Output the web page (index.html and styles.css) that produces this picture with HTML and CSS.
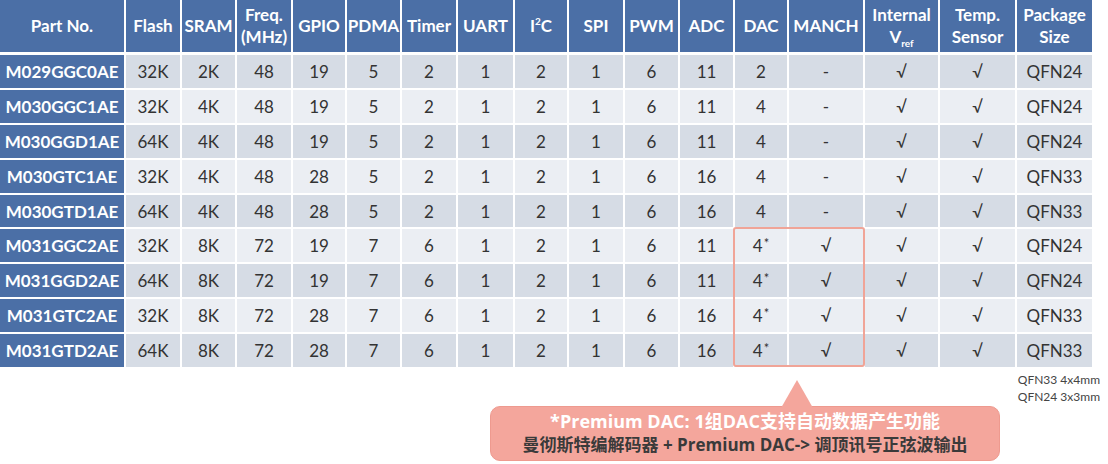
FILE: index.html
```html
<!DOCTYPE html>
<html lang="zh">
<head>
<meta charset="utf-8">
<title>M031 Series</title>
<link rel="stylesheet" href="styles.css">
</head>
<body>
<div class="page">
  <div class="table-wrap">
    <div class="grid">
      <div class="h"><span>Part No.</span></div>
      <div class="h"><span>Flash</span></div>
      <div class="h"><span>SRAM</span></div>
      <div class="h"><span>Freq.<br>(MHz)</span></div>
      <div class="h"><span>GPIO</span></div>
      <div class="h"><span>PDMA</span></div>
      <div class="h"><span>Timer</span></div>
      <div class="h"><span>UART</span></div>
      <div class="h"><span>I<sup>2</sup>C</span></div>
      <div class="h"><span>SPI</span></div>
      <div class="h"><span>PWM</span></div>
      <div class="h"><span>ADC</span></div>
      <div class="h"><span>DAC</span></div>
      <div class="h"><span>MANCH</span></div>
      <div class="h"><span>Internal<br>V<sub>ref</sub></span></div>
      <div class="h"><span>Temp.<br>Sensor</span></div>
      <div class="h"><span>Package<br>Size</span></div>

      <div class="p">M029GGC0AE</div><div class="c d">32K</div><div class="c d">2K</div><div class="c d">48</div><div class="c d">19</div><div class="c d">5</div><div class="c d">2</div><div class="c d">1</div><div class="c d">2</div><div class="c d">1</div><div class="c d">6</div><div class="c d">11</div><div class="c d">2</div><div class="c d">-</div><div class="c d">√</div><div class="c d">√</div><div class="c d">QFN24</div>

      <div class="p">M030GGC1AE</div><div class="c l">32K</div><div class="c l">4K</div><div class="c l">48</div><div class="c l">19</div><div class="c l">5</div><div class="c l">2</div><div class="c l">1</div><div class="c l">2</div><div class="c l">1</div><div class="c l">6</div><div class="c l">11</div><div class="c l">4</div><div class="c l">-</div><div class="c l">√</div><div class="c l">√</div><div class="c l">QFN24</div>

      <div class="p">M030GGD1AE</div><div class="c d">64K</div><div class="c d">4K</div><div class="c d">48</div><div class="c d">19</div><div class="c d">5</div><div class="c d">2</div><div class="c d">1</div><div class="c d">2</div><div class="c d">1</div><div class="c d">6</div><div class="c d">11</div><div class="c d">4</div><div class="c d">-</div><div class="c d">√</div><div class="c d">√</div><div class="c d">QFN24</div>

      <div class="p">M030GTC1AE</div><div class="c l">32K</div><div class="c l">4K</div><div class="c l">48</div><div class="c l">28</div><div class="c l">5</div><div class="c l">2</div><div class="c l">1</div><div class="c l">2</div><div class="c l">1</div><div class="c l">6</div><div class="c l">16</div><div class="c l">4</div><div class="c l">-</div><div class="c l">√</div><div class="c l">√</div><div class="c l">QFN33</div>

      <div class="p">M030GTD1AE</div><div class="c d">64K</div><div class="c d">4K</div><div class="c d">48</div><div class="c d">28</div><div class="c d">5</div><div class="c d">2</div><div class="c d">1</div><div class="c d">2</div><div class="c d">1</div><div class="c d">6</div><div class="c d">16</div><div class="c d">4</div><div class="c d">-</div><div class="c d">√</div><div class="c d">√</div><div class="c d">QFN33</div>

      <div class="p">M031GGC2AE</div><div class="c l">32K</div><div class="c l">8K</div><div class="c l">72</div><div class="c l">19</div><div class="c l">7</div><div class="c l">6</div><div class="c l">1</div><div class="c l">2</div><div class="c l">1</div><div class="c l">6</div><div class="c l">11</div><div class="c l">4<span class="ast">*</span></div><div class="c l">√</div><div class="c l">√</div><div class="c l">√</div><div class="c l">QFN24</div>

      <div class="p">M031GGD2AE</div><div class="c d">64K</div><div class="c d">8K</div><div class="c d">72</div><div class="c d">19</div><div class="c d">7</div><div class="c d">6</div><div class="c d">1</div><div class="c d">2</div><div class="c d">1</div><div class="c d">6</div><div class="c d">11</div><div class="c d">4<span class="ast">*</span></div><div class="c d">√</div><div class="c d">√</div><div class="c d">√</div><div class="c d">QFN24</div>

      <div class="p">M031GTC2AE</div><div class="c l">32K</div><div class="c l">8K</div><div class="c l">72</div><div class="c l">28</div><div class="c l">7</div><div class="c l">6</div><div class="c l">1</div><div class="c l">2</div><div class="c l">1</div><div class="c l">6</div><div class="c l">16</div><div class="c l">4<span class="ast">*</span></div><div class="c l">√</div><div class="c l">√</div><div class="c l">√</div><div class="c l">QFN33</div>

      <div class="p">M031GTD2AE</div><div class="c d">64K</div><div class="c d">8K</div><div class="c d">72</div><div class="c d">28</div><div class="c d">7</div><div class="c d">6</div><div class="c d">1</div><div class="c d">2</div><div class="c d">1</div><div class="c d">6</div><div class="c d">16</div><div class="c d">4<span class="ast">*</span></div><div class="c d">√</div><div class="c d">√</div><div class="c d">√</div><div class="c d">QFN33</div>
    </div>
    <div class="highlight"></div>
  </div>

  <div class="notes">
    <div>QFN33 4x4mm</div>
    <div>QFN24 3x3mm</div>
  </div>

  <div class="callout">
    <div class="line1">*Premium DAC: 1组DAC支持自动数据产生功能</div>
    <div class="line2">曼彻斯特编解码器 + Premium DAC-&gt; 调顶讯号正弦波输出</div>
  </div>
</div>
</body>
</html>
```

FILE: styles.css
```css
html, body {
  margin: 0;
  padding: 0;
  background: #ffffff;
}

.page {
  width: 1108px;
  height: 464px;
  overflow: hidden;
  font-family: Lato, "Open Sans", "Noto Sans CJK SC", sans-serif;
  color: #333333;
}

.table-wrap {
  position: relative;
  width: 1092px;
}

.grid {
  display: grid;
  grid-template-columns: 124px 54px 53px 54px 52px 53px 54px 55px 52px 54px 53px 53px 52px 74px 73px 75px 75px;
  grid-template-rows: 53px repeat(9, 32.9px);
  column-gap: 2px;
  row-gap: 2px;
}

.h {
  background: #4b6fa6;
  color: #ffffff;
  font-weight: 700;
  font-size: 17px;
  display: flex;
  align-items: center;
  justify-content: center;
  text-align: center;
  line-height: 22px;
  padding-bottom: 1px;
  box-sizing: border-box;
  height: 52px;
}

.h sup {
  font-size: 10px;
  line-height: 0;
  vertical-align: 7px;
}

.h sub {
  font-size: 10px;
  line-height: 0;
  vertical-align: -4px;
}

.p {
  background: #4b6fa6;
  color: #ffffff;
  font-weight: 700;
  font-size: 17px;
  display: flex;
  align-items: center;
  justify-content: center;
}

.c {
  display: flex;
  align-items: center;
  justify-content: center;
  font-size: 17px;
  color: #333333;
}

.ast {
  font-size: 13px;
  align-self: flex-start;
  margin-top: 6px;
  margin-left: 1px;
}

.d {
  background: #d6dce5;
}

.l {
  background: #ebeef3;
}

.highlight {
  position: absolute;
  left: 733px;
  top: 227px;
  width: 128px;
  height: 136px;
  border: 2px solid #f0a497;
  border-radius: 3px;
}

.notes {
  text-align: right;
  padding-right: 8px;
  padding-top: 4px;
  font-size: 12px;
  line-height: 17px;
  color: #444444;
}

.callout {
  position: relative;
  margin-left: 490px;
  margin-top: 1px;
  width: 510px;
  height: 55px;
  box-sizing: border-box;
  border-radius: 10px;
  background: #f4a69c;
  border: 1px solid #ee9a8f;
  text-align: center;
  font-weight: 700;
  font-family: "Open Sans", "Noto Sans CJK SC", sans-serif;
  padding-top: 2px;
}

.callout::before {
  content: "";
  position: absolute;
  left: 290px;
  top: -27px;
  width: 0;
  height: 0;
  border-left: 16px solid transparent;
  border-right: 16px solid transparent;
  border-bottom: 28px solid #f4a69c;
}

.line1 {
  color: #ffffff;
  font-size: 18px;
  line-height: 25px;
}

.line2 {
  color: #3a3a3a;
  font-size: 17px;
  line-height: 22px;
}
```
